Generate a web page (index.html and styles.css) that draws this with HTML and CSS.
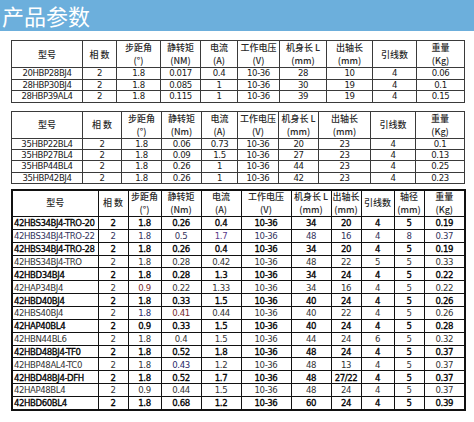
FILE: index.html
```html
<!DOCTYPE html>
<html lang="zh">
<head>
<meta charset="utf-8">
<link rel="stylesheet" href="styles.css">
</head>
<body>
<div class="title">产品参数</div>

<table class="spec spec-a">
<colgroup><col style="width:71px"><col style="width:34px"><col style="width:44px"><col style="width:40px"><col style="width:37px"><col style="width:42px"><col style="width:47px"><col style="width:46px"><col style="width:44px"><col style="width:48px"></colgroup>
<tr class="head"><th>型号</th><th>相 数</th><th>步距角<br>(°)</th><th>静转矩<br>(NM)</th><th>电流<br>(A)</th><th>工作电压<br>(V)</th><th>机身长 L<br>(mm)</th><th>出轴长<br>(mm)</th><th>引线数</th><th>重量<br>(Kg)</th></tr>
<tr><td>20HBP28BJ4</td><td>2</td><td>1.8</td><td>0.017</td><td>0.4</td><td>10-36</td><td>28</td><td>10</td><td>4</td><td>0.06</td></tr>
<tr><td>28HBP30BJ4</td><td>2</td><td>1.8</td><td>0.085</td><td>1</td><td>10-36</td><td>30</td><td>19</td><td>4</td><td>0.1</td></tr>
<tr><td>28HBP39AL4</td><td>2</td><td>1.8</td><td>0.115</td><td>1</td><td>10-36</td><td>39</td><td>19</td><td>4</td><td>0.15</td></tr>
</table>

<table class="spec spec-b">
<colgroup><col style="width:71px"><col style="width:39px"><col style="width:40px"><col style="width:40px"><col style="width:36px"><col style="width:41px"><col style="width:40px"><col style="width:52px"><col style="width:45px"><col style="width:49px"></colgroup>
<tr class="head"><th>型号</th><th>相 数</th><th>步距角<br>(°)</th><th>静转矩<br>(Nm)</th><th>电流<br>(A)</th><th>工作电压<br>(V)</th><th>机身长 L<br>(mm)</th><th>出轴长<br>(mm)</th><th>引线数</th><th>重量<br>(Kg)</th></tr>
<tr><td>35HBP22BL4</td><td>2</td><td>1.8</td><td>0.06</td><td>0.73</td><td>10-36</td><td>20</td><td>23</td><td>4</td><td>0.1</td></tr>
<tr><td>35HBP27BL4</td><td>2</td><td>1.8</td><td>0.09</td><td>1.5</td><td>10-36</td><td>27</td><td>23</td><td>4</td><td>0.13</td></tr>
<tr><td>35HBP44BL4</td><td>2</td><td>1.8</td><td>0.26</td><td>1</td><td>10-36</td><td>44</td><td>23</td><td>4</td><td>0.25</td></tr>
<tr><td>35HBP42BJ4</td><td>2</td><td>1.8</td><td>0.26</td><td>1</td><td>10-36</td><td>42</td><td>23</td><td>4</td><td>0.23</td></tr>
</table>

<table class="spec spec-c">
<colgroup><col style="width:86px"><col style="width:30px"><col style="width:33px"><col style="width:40px"><col style="width:40px"><col style="width:50px"><col style="width:40px"><col style="width:30px"><col style="width:33px"><col style="width:30px"><col style="width:41px"></colgroup>
<tr class="head"><th>型号</th><th>相 数</th><th>步距角<br>(°)</th><th>静转矩<br>(Nm)</th><th>电流<br>(A)</th><th>工作电压<br>(V)</th><th>机身长 L<br>(mm)</th><th class="shaft">出轴长<br>(mm)</th><th>引线数</th><th>轴径<br>(mm)</th><th>重量<br>(Kg)</th></tr>
<tr class="b"><td>42HBS34BJ4-TRO-20</td><td>2</td><td>1.8</td><td>0.26</td><td>0.4</td><td>10-36</td><td>34</td><td class="shaft">20</td><td>4</td><td>5</td><td>0.19</td></tr>
<tr class="n navy"><td>42HBS34BJ4-TRO-22</td><td>2</td><td>1.8</td><td>0.5</td><td class="purple">1.7</td><td>10-36</td><td>48</td><td class="shaft">16</td><td>4</td><td>8</td><td>0.37</td></tr>
<tr class="b"><td>42HBS34BJ4-TRO-28</td><td>2</td><td>1.8</td><td>0.26</td><td>0.4</td><td>10-36</td><td>34</td><td class="shaft">20</td><td>4</td><td>5</td><td>0.19</td></tr>
<tr class="n"><td>42HBS34BJ4-TRO</td><td>2</td><td>1.8</td><td>0.28</td><td>0.42</td><td>10-36</td><td>48</td><td class="shaft">22</td><td>5</td><td>5</td><td>0.33</td></tr>
<tr class="b"><td>42HBD34BJ4</td><td>2</td><td>1.8</td><td>0.28</td><td>1.3</td><td>10-36</td><td>34</td><td class="shaft">24</td><td>4</td><td>5</td><td>0.22</td></tr>
<tr class="n"><td>42HAP34BJ4</td><td>2</td><td class="red">0.9</td><td>0.22</td><td>1.33</td><td>10-36</td><td>34</td><td class="shaft">16</td><td>4</td><td>5</td><td>0.22</td></tr>
<tr class="b"><td>42HBD40BJ4</td><td>2</td><td>1.8</td><td>0.33</td><td>1.5</td><td>10-36</td><td>40</td><td class="shaft">24</td><td>4</td><td>5</td><td>0.26</td></tr>
<tr class="n"><td>42HBS40BJ4</td><td>2</td><td class="navytxt">1.8</td><td class="red">0.41</td><td>0.44</td><td>10-36</td><td>40</td><td class="shaft">22</td><td>4</td><td>5</td><td>0.26</td></tr>
<tr class="b"><td>42HAP40BL4</td><td>2</td><td>0.9</td><td>0.33</td><td>1.5</td><td>10-36</td><td>40</td><td class="shaft">24</td><td>4</td><td>5</td><td>0.28</td></tr>
<tr class="n"><td>42HBN44BL6</td><td>2</td><td>1.8</td><td>0.4</td><td>1.5</td><td>10-36</td><td>44</td><td class="shaft">24</td><td>6</td><td>5</td><td>0.32</td></tr>
<tr class="b"><td>42HBD48BJ4-TF0</td><td>2</td><td>1.8</td><td>0.52</td><td>1.8</td><td>10-36</td><td>48</td><td class="shaft">24</td><td>4</td><td>5</td><td>0.37</td></tr>
<tr class="n"><td>42HBP48AL4-TC0</td><td>2</td><td>1.8</td><td class="navytxt">0.43</td><td>1.2</td><td>10-36</td><td>48</td><td class="shaft">13</td><td>4</td><td>5</td><td>0.37</td></tr>
<tr class="b"><td>42HBD48BJ4-DFH</td><td>2</td><td>1.8</td><td>0.52</td><td>1.7</td><td>10-36</td><td>48</td><td class="shaft">27/22</td><td>4</td><td>5</td><td>0.37</td></tr>
<tr class="n"><td>42HAP48BL4</td><td>2</td><td>0.9</td><td>0.44</td><td>1.5</td><td>10-36</td><td>48</td><td class="shaft">24</td><td>4</td><td>5</td><td>0.37</td></tr>
<tr class="b"><td>42HBD60BL4</td><td>2</td><td>1.8</td><td>0.68</td><td>1.2</td><td>10-36</td><td>60</td><td class="shaft">24</td><td>4</td><td>5</td><td>0.39</td></tr>
</table>
</body>
</html>
```

FILE: styles.css
```css
html, body {
  margin: 0;
  padding: 0;
  background: #ffffff;
}
body {
  width: 474px;
  height: 422px;
  overflow: hidden;
  font-family: "DejaVu Sans Condensed", "Liberation Sans", "Noto Sans CJK SC", sans-serif;
  color: #1a1a1a;
}
.title {
  height: 31px;
  background: #6cafdc;
  color: #ffffff;
  font-family: "Noto Sans CJK SC", sans-serif;
  font-weight: 400;
  font-size: 22px;
  line-height: 30px;
  padding-left: 2px;
}
.spec {
  border-collapse: collapse;
  table-layout: fixed;
  width: 453px;
  margin-left: 11px;
}
.spec th, .spec td {
  padding: 0;
  text-align: center;
  white-space: nowrap;
  overflow: hidden;
}
.spec th {
  font-family: "Noto Sans CJK SC", sans-serif;
  font-weight: 500;
  font-size: 9px;
  color: #2a2a2a;
}
.spec-a, .spec-b {
  border: 1px solid #333;
}
.spec-a th, .spec-a td, .spec-b th, .spec-b td {
  border: 1px solid #3a3a3a;
}
.spec td {
  font-size: 9.5px;
  letter-spacing: -0.4px;
}
.spec-a {
  margin-top: 9px;
}
.spec-a .head th, .spec-b .head th {
  height: 25px;
  line-height: 13px;
}
.spec-a td {
  height: 10.5px;
  line-height: 10px;
}
.spec-b {
  margin-top: 8px;
}
.spec-b td {
  height: 10.4px;
  line-height: 10px;
}
.spec-c {
  margin-top: 5px;
  border: 2px solid #111;
}
.spec-c th, .spec-c td {
  border: 1px solid #111;
}
.spec-c .head th {
  height: 25px;
  line-height: 12.5px;
}
.spec-c td {
  height: 11.85px;
  line-height: 11px;
}
.spec-c td:first-child {
  text-align: left;
  padding-left: 1px;
}
.spec-c .shaft {
  border-left-color: #9a9a9a;
}
.spec-c tr.b td {
  font-weight: normal;
  color: #000;
  -webkit-text-stroke: 0.3px #000;
}
.spec-c tr.n td {
  font-weight: normal;
  color: #333;
}
.spec-c tr.navy td {
  color: #33335c;
}
.spec-c tr.n td.purple {
  color: #5a3a8a;
}
.spec-c tr.n td.red {
  color: #7a2a2a;
}
.spec-c tr.n td.navytxt {
  color: #2a2a6a;
}
```
